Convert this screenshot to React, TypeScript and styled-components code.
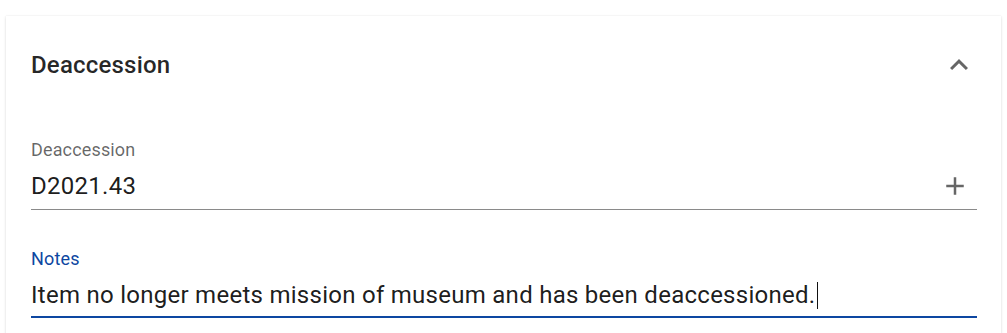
import React from "react";
import styled, { createGlobalStyle } from "styled-components";

const GlobalStyle = createGlobalStyle`
  html, body {
    margin: 0;
    padding: 0;
    background: #ffffff;
    font-family: Roboto, "Liberation Sans", Arial, sans-serif;
    -webkit-font-smoothing: antialiased;
  }
`;

const Page = styled.div`
  padding: 16px 6px 0 6px;
`;

const Card = styled.section`
  background: #ffffff;
  box-shadow: 0 1px 3px rgba(0, 0, 0, 0.12), 0 0 1px rgba(0, 0, 0, 0.1);
  padding: 0 24px 40px 25px;
`;

const Header = styled.div`
  height: 98px;
  display: flex;
  align-items: center;
  justify-content: space-between;
`;

const Title = styled.h2`
  margin: 0;
  font-size: 24px;
  line-height: 32px;
  font-weight: 500;
  color: rgba(0, 0, 0, 0.85);
  letter-spacing: 0.2px;
`;

const IconSlot = styled.span<{ $size: number; $offset?: number }>`
  display: inline-flex;
  width: ${(p) => p.$size}px;
  height: ${(p) => p.$size}px;
  margin-right: ${(p) => p.$offset ?? 0}px;
  color: #666666;
  flex: none;
  svg {
    width: 100%;
    height: 100%;
    fill: currentColor;
  }
`;

const Field = styled.div<{ $focused?: boolean; $top: number }>`
  position: relative;
  margin-top: ${(p) => p.$top}px;
  padding-bottom: 8px;
  &::after {
    content: "";
    position: absolute;
    left: 0;
    right: 0;
    bottom: ${(p) => (p.$focused ? 1 : 0)}px;
    height: ${(p) => (p.$focused ? 2 : 1)}px;
    background: ${(p) => (p.$focused ? "#0d47a1" : "#8a8a8a")};
  }
`;

const Label = styled.div<{ $focused?: boolean }>`
  font-size: 18px;
  line-height: 24px;
  color: ${(p) => (p.$focused ? "#0d47a1" : "rgba(0, 0, 0, 0.6)")};
  margin-bottom: 8px;
  letter-spacing: 0.15px;
`;

const ValueRow = styled.div`
  display: flex;
  align-items: center;
  justify-content: space-between;
  height: 32px;
`;

const Value = styled.div`
  font-size: 24px;
  line-height: 32px;
  color: rgba(0, 0, 0, 0.9);
  white-space: nowrap;
  letter-spacing: 0.27px;
`;

const Caret = styled.span`
  display: inline-block;
  width: 0;
  height: 27px;
  border-left: 1px solid #111;
  vertical-align: -6px;
  margin-left: 2px;
`;

const ChevronUp = () => (
  <svg viewBox="0 0 24 24" aria-hidden="true">
    <path d="M12 8l-6 6 1.41 1.41L12 10.83l4.59 4.58L18 14z" />
  </svg>
);

const Plus = () => (
  <svg viewBox="0 0 24 24" aria-hidden="true">
    <path d="M19 13h-6v6h-2v-6H5v-2h6V5h2v6h6v2z" />
  </svg>
);

export default function App() {
  return (
    <>
      <GlobalStyle />
      <Page>
        <Card>
          <Header>
            <Title>Deaccession</Title>
            <IconSlot $size={36}>
              <ChevronUp />
            </IconSlot>
          </Header>
          <Field $top={24}>
            <Label>Deaccession</Label>
            <ValueRow>
              <Value>D2021.43</Value>
              <IconSlot $size={30} $offset={7}>
                <Plus />
              </IconSlot>
            </ValueRow>
          </Field>
          <Field $top={37} $focused>
            <Label $focused>Notes</Label>
            <ValueRow>
              <Value>
                Item no longer meets mission of museum and has been deaccessioned.
                <Caret />
              </Value>
            </ValueRow>
          </Field>
        </Card>
      </Page>
    </>
  );
}
